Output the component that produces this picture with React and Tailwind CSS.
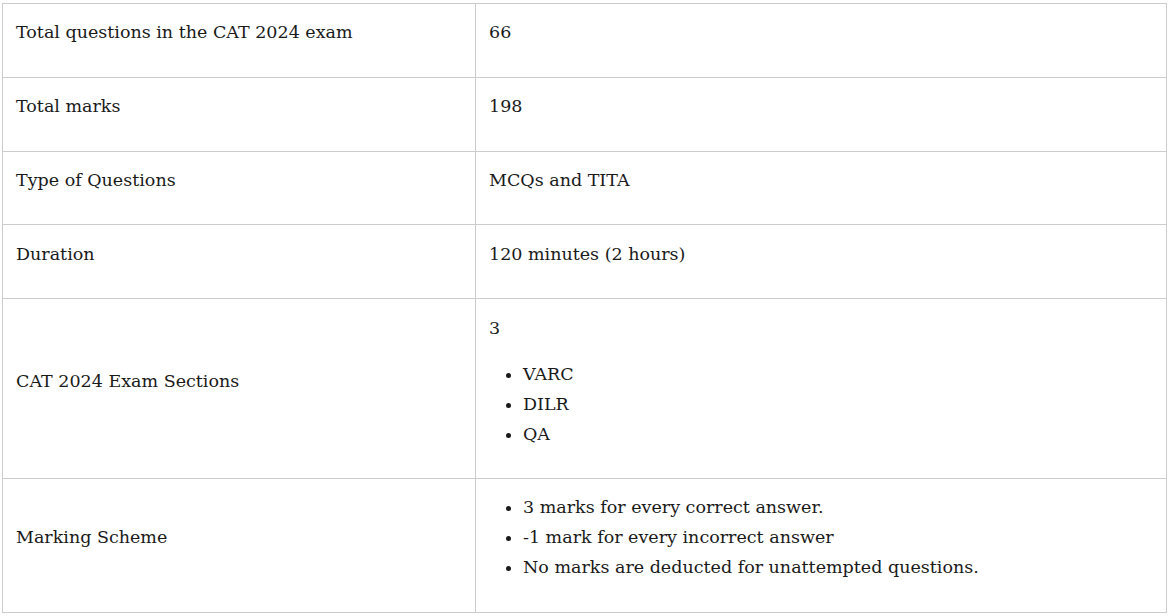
import React from 'react';

const rows = [
  { label: 'Total questions in the CAT 2024 exam', value: ['66'] },
  { label: 'Total marks', value: ['198'] },
  { label: 'Type of Questions', value: ['MCQs and TITA'] },
  { label: 'Duration', value: ['120 minutes (2 hours)'] },
  { label: 'CAT 2024 Exam Sections', value: ['3'], list: ['VARC', 'DILR', 'QA'] },
  {
    label: 'Marking Scheme',
    list: [
      '3 marks for every correct answer.',
      '-1 mark for every incorrect answer',
      'No marks are deducted for unattempted questions.',
    ],
  },
];

export default function App() {
  return (
    <div className="bg-white min-h-screen pt-[3px] pl-[2px] font-['DejaVu_Serif',serif] text-[17.5px] leading-[30px] text-[#1a1a1a]">
      <table className="w-[1165px] border-collapse">
        <tbody>
          {rows.map((r) => (
            <tr key={r.label}>
              <td className="w-[473px] border border-[#cccccc] px-[13px] py-[13.4px] align-middle">
                <p className="mb-4">{r.label}</p>
              </td>
              <td className="border border-[#cccccc] px-[13px] py-[13.4px] align-middle">
                {r.value && r.value.map((v) => (
                  <p key={v} className="mb-4">{v}</p>
                ))}
                {r.list && (
                  <ul className="list-disc pl-[34px] mb-4">
                    {r.list.map((li) => (
                      <li key={li}>{li}</li>
                    ))}
                  </ul>
                )}
              </td>
            </tr>
          ))}
        </tbody>
      </table>
    </div>
  );
}
